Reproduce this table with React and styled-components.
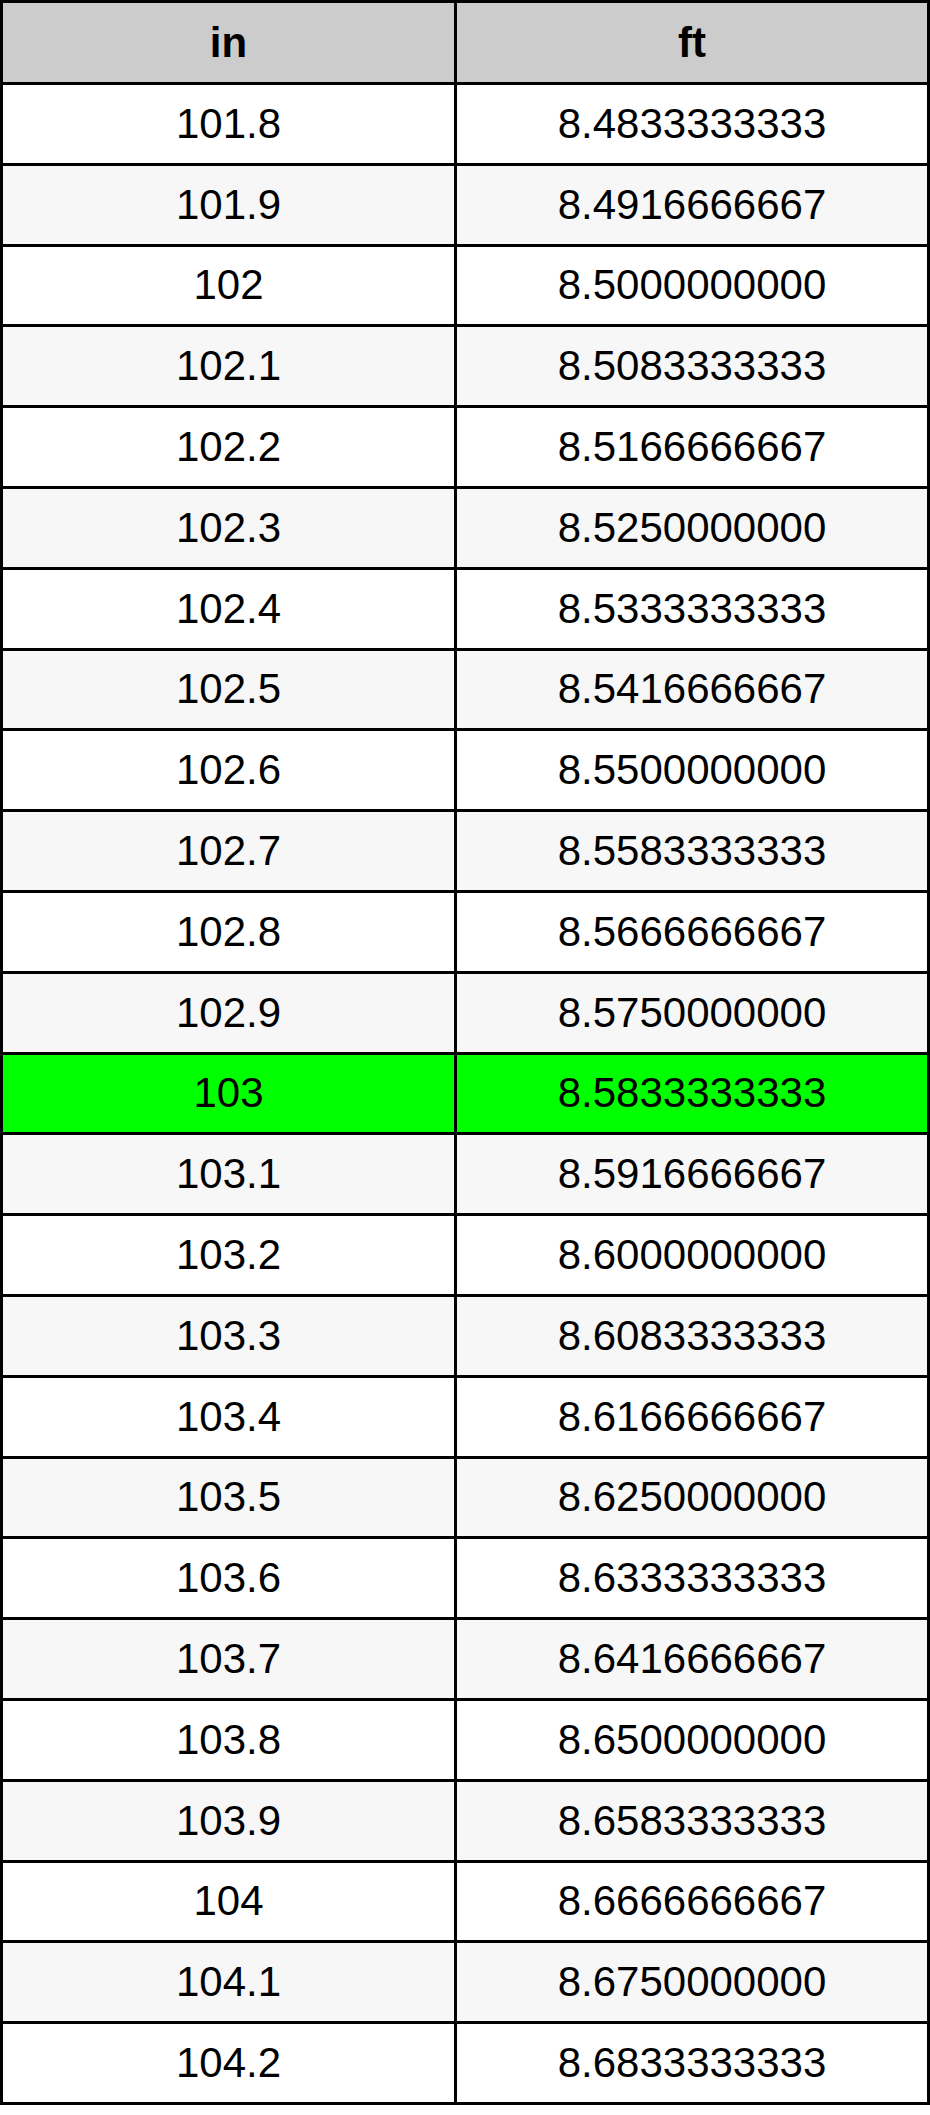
import styled, { createGlobalStyle } from 'styled-components'

const GlobalStyle = createGlobalStyle`
  html, body {
    margin: 0;
    padding: 0;
    background: #fff;
  }
  body {
    font-family: "Liberation Sans", Arial, sans-serif;
    color: #000;
  }
`

const Table = styled.div`
  display: grid;
  grid-template-columns: 451px 470px;
  grid-template-rows: 79px;
  grid-auto-rows: 77.8px;
  gap: 3px;
  width: 930px;
  box-sizing: border-box;
  border: 3px solid #000;
  background: #000;
`

const Cell = styled.div`
  display: flex;
  align-items: center;
  justify-content: center;
  font-size: 42px;
  line-height: 1;
  font-weight: ${(p) => (p.$head ? 'bold' : 'normal')};
  background: ${(p) =>
    p.$head ? '#cccccc' : p.$active ? '#00ff00' : p.$alt ? '#f7f7f7' : '#ffffff'};
`

const rows = [
  ['101.8', '8.4833333333'],
  ['101.9', '8.4916666667'],
  ['102', '8.5000000000'],
  ['102.1', '8.5083333333'],
  ['102.2', '8.5166666667'],
  ['102.3', '8.5250000000'],
  ['102.4', '8.5333333333'],
  ['102.5', '8.5416666667'],
  ['102.6', '8.5500000000'],
  ['102.7', '8.5583333333'],
  ['102.8', '8.5666666667'],
  ['102.9', '8.5750000000'],
  ['103', '8.5833333333'],
  ['103.1', '8.5916666667'],
  ['103.2', '8.6000000000'],
  ['103.3', '8.6083333333'],
  ['103.4', '8.6166666667'],
  ['103.5', '8.6250000000'],
  ['103.6', '8.6333333333'],
  ['103.7', '8.6416666667'],
  ['103.8', '8.6500000000'],
  ['103.9', '8.6583333333'],
  ['104', '8.6666666667'],
  ['104.1', '8.6750000000'],
  ['104.2', '8.6833333333'],
]

export default function App() {
  return (
    <>
      <GlobalStyle />
      <Table>
        <Cell $head>in</Cell>
        <Cell $head>ft</Cell>
        {rows.map(([inches, feet], i) => {
          const active = inches === '103'
          const alt = i % 2 === 1
          return [
            <Cell key={inches + '-in'} $active={active} $alt={alt}>
              {inches}
            </Cell>,
            <Cell key={inches + '-ft'} $active={active} $alt={alt}>
              {feet}
            </Cell>,
          ]
        })}
      </Table>
    </>
  )
}
